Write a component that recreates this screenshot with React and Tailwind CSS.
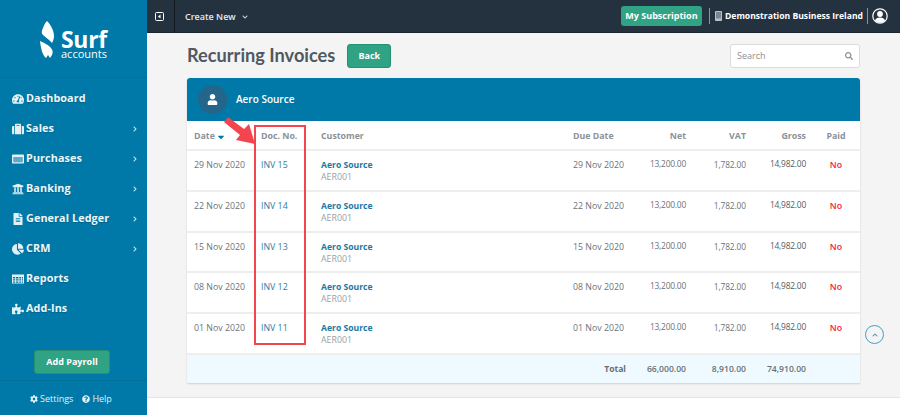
import React from "react";
import {
  FaTachometerAlt,
  FaSuitcase,
  FaUniversity,
  FaFileAlt,
  FaChartPie,
  FaPuzzlePiece,
  FaCog,
  FaQuestionCircle,
  FaSearch,
  FaUser,
  FaChevronRight,
  FaChevronUp,
  FaChevronDown,
  FaCaretDown,
} from "react-icons/fa";

const WindowIcon = ({ className }) => (
  <svg viewBox="0 0 12 12" className={className}>
    <rect x="0" y="1.5" width="12" height="9" rx="0.8" fill="currentColor" />
    <rect x="1.2" y="4" width="9.6" height="5.3" fill="#5fa9c8" />
  </svg>
);

const GridIcon = ({ className }) => (
  <svg viewBox="0 0 12 12" className={className}>
    <rect x="0" y="1.5" width="12" height="9" fill="currentColor" />
    <path d="M1 4H3.2V5.4H1ZM4 4H6.5V5.4H4ZM7.3 4H9V5.4H7.3ZM9.8 4H11V5.4H9.8ZM1 6.2H3.2V7.6H1ZM4 6.2H6.5V7.6H4ZM7.3 6.2H9V7.6H7.3ZM9.8 6.2H11V7.6H9.8ZM1 8.4H3.2V9.7H1ZM4 8.4H6.5V9.7H4ZM7.3 8.4H9V9.7H7.3ZM9.8 8.4H11V9.7H9.8Z" fill="#0079a8" />
  </svg>
);

const navItems = [
  { label: "Dashboard", icon: FaTachometerAlt },
  { label: "Sales", icon: FaSuitcase, arrow: true },
  { label: "Purchases", icon: WindowIcon, arrow: true },
  { label: "Banking", icon: FaUniversity, arrow: true },
  { label: "General Ledger", icon: FaFileAlt, arrow: true },
  { label: "CRM", icon: FaChartPie, arrow: true },
  { label: "Reports", icon: GridIcon },
  { label: "Add-Ins", icon: FaPuzzlePiece },
];

const rows = [
  { date: "29 Nov 2020", doc: "INV 15" },
  { date: "22 Nov 2020", doc: "INV 14" },
  { date: "15 Nov 2020", doc: "INV 13" },
  { date: "08 Nov 2020", doc: "INV 12" },
  { date: "01 Nov 2020", doc: "INV 11" },
];

const cols = "grid grid-cols-[67px_60px_252px_73px_40px_60px_60px_54px]";

const Sidebar = () => (
  <div className="w-[147px] shrink-0 h-[415px] bg-[#0079a8] flex flex-col text-white">
    <div className="h-[78px] border-b border-[#066f99] flex items-start pl-[40px]">
      <svg width="15" height="37" viewBox="40 21 15 37" className="mr-[6px] mt-[21px]">
        <path d="M47 21C51 25 54 31 54 36C54 39 53 41 52 43C50 40 46 38 43 35C41 33 42 30 43 28C44 25 45 23 47 21Z" fill="white" />
        <path d="M40 41C44 43 49 45 51 48C53 50 53 53 52 55L50 58L48 55L46 58C43 56 41 50 40 41Z" fill="white" />
      </svg>
      <div className="flex flex-col mt-[31px]">
        <span className="text-[23px] font-bold leading-[17px] tracking-[-0.3px]">Surf</span>
        <span className="text-[11px] leading-[13px] mt-[-1px]">accounts</span>
      </div>
    </div>
    <div className="flex flex-col pt-[5.5px]">
      {navItems.map((item) => {
        const Icon = item.icon;
        return (
          <div key={item.label} className="h-[30px] flex items-center pl-[12px] pr-[9px]">
            <Icon className="w-[12px] h-[12px] text-[#e3f1f6] mr-[2px]" />
            <span className="text-[10.8px] font-bold text-[#eef7fa] tracking-[0.1px] [text-shadow:0_1px_1px_rgba(0,0,0,0.2)]">
              {item.label}
            </span>
            {item.arrow && <FaChevronRight className="w-[6px] h-[6px] ml-auto text-[#d6eaf2]" />}
          </div>
        );
      })}
    </div>
    <div className="mt-[26.5px] pl-[34px]">
      <div className="w-[76px] h-[24px] rounded-[3px] bg-[#2fa384] border border-[#288f75] flex items-center justify-center text-[9px] font-bold">
        Add Payroll
      </div>
    </div>
    <div className="mt-[6px] pt-[7px] pl-[30px] border-t border-[#066f99] flex-1 flex items-start text-[9px] text-[#e3f1f6]">
      <div className="flex items-center h-[22px]">
        <FaCog className="w-[8px] h-[8px] mr-[2px]" />
        <span>Settings</span>
        <span className="w-px h-[10px] bg-[#066f99] mx-[4px]"></span>
        <FaQuestionCircle className="w-[8px] h-[8px] mr-[2px]" />
        <span>Help</span>
      </div>
    </div>
  </div>
);

const Topbar = () => (
  <div className="h-[33px] shrink-0 bg-[#243240] border-b border-[#1a2530] flex items-center text-white">
    <div className="w-[28px] h-full border-r border-[#101820] flex items-center justify-center pr-[2px]">
      <svg width="9" height="9" viewBox="0 0 9 9">
        <rect x="0.5" y="0.5" width="8" height="8" rx="1" fill="none" stroke="white" />
        <path d="M5.5 2.5V6.5L3 4.5Z" fill="white" />
      </svg>
    </div>
    <span className="ml-[10px] text-[9px] font-semibold text-[#e6e9ec] mt-[1px]">Create New</span>
    <FaChevronDown className="w-[6px] h-[6px] ml-[6px] text-[#cfd5da] mt-[1px]" />
    <div className="ml-auto flex items-center">
      <div className="w-[81px] h-[20px] rounded-[3px] bg-[#2fa384] flex items-center justify-center text-[9px] font-bold">
        My Subscription
      </div>
      <span className="w-px h-[16px] bg-[#8a949d] ml-[7px] mr-[5px]"></span>
      <svg width="8" height="10" viewBox="0 0 8 10" className="mr-[2px]">
        <rect x="0" y="0" width="7" height="10" rx="0.8" fill="#b9c0c6" />
        <rect x="1" y="1" width="5" height="6.5" fill="#7d868e" />
      </svg>
      <span className="text-[8.6px] font-bold">Demonstration Business Ireland</span>
      <span className="w-px h-[16px] bg-[#8a949d] ml-[4px] mr-[4px]"></span>
      <svg width="16" height="16" viewBox="0 0 16 16" className="mr-[12px]">
        <circle cx="8" cy="8" r="7.2" fill="#243240" stroke="white" strokeWidth="1.2" />
        <circle cx="8" cy="6" r="2.9" fill="white" />
        <path d="M3 13C3.5 10.5 5.5 9.6 8 9.6C10.5 9.6 12.5 10.5 13 13C11.6 14.2 9.9 14.8 8 14.8C6.1 14.8 4.4 14.2 3 13Z" fill="white" />
      </svg>
    </div>
  </div>
);

const Table = () => (
  <div className="bg-white shadow-[0_1px_2px_rgba(0,0,0,0.15)] rounded-t-[3px]">
    <div className="h-[43px] bg-[#0079a8] rounded-t-[3px] flex items-center pl-[11px]">
      <div className="w-[29px] h-[29px] rounded-full bg-[#23668a] flex items-center justify-center">
        <FaUser className="w-[11px] h-[11px] text-white" />
      </div>
      <span className="ml-[9px] text-[10px] font-semibold text-white">Aero Source</span>
    </div>
    <div className={`${cols} h-[30px] items-center pl-[7px] pt-[3px] text-[8.8px] font-bold text-[#8b9299] border-b-2 border-[#eeeeee]`}>
      <div className="flex items-center gap-[1px]">
        Date <FaCaretDown className="w-[10px] h-[10px] text-[#0079a8]" />
      </div>
      <div>Doc. No.</div>
      <div>Customer</div>
      <div>Due Date</div>
      <div className="text-right">Net</div>
      <div className="text-right">VAT</div>
      <div className="text-right">Gross</div>
      <div className="text-center pl-[6px]">Paid</div>
    </div>
    {rows.map((row) => (
      <div key={row.doc} className={`${cols} h-[40.75px] pl-[7px] pt-[8px] text-[8.8px] text-[#6d7378] border-b-2 border-[#eeeeee]`}>
        <div>{row.date}</div>
        <div className="text-[#2b7da8]">{row.doc}</div>
        <div>
          <div className="font-bold text-[8.6px] text-[#1d78a3] leading-[12px]">Aero Source</div>
          <div className="text-[#9a9fa4] leading-[12px]">AER001</div>
        </div>
        <div>{row.date}</div>
        <div className="text-right text-[8.4px] tracking-[-0.2px] mt-[-1px]">13,200.00</div>
        <div className="text-right text-[8.4px] tracking-[-0.1px]">1,782.00</div>
        <div className="text-right text-[8.4px] tracking-[-0.2px] font-medium mt-[-1px] text-[#555a5e]">14,982.00</div>
        <div className="text-center pl-[6px] font-semibold text-[#f5213c]">No</div>
      </div>
    ))}
    <div className={`${cols} h-[28.5px] items-center pl-[7px] text-[8.6px] font-semibold text-[#6a7075] bg-[#eefaff]`}>
      <div className="col-span-4 text-right font-bold pr-[20px]">Total</div>
      <div className="text-right">66,000.00</div>
      <div className="text-right">8,910.00</div>
      <div className="text-right">74,910.00</div>
      <div></div>
    </div>
  </div>
);

export default function App() {
  return (
    <div className="relative w-[900px] h-[415px] overflow-hidden flex bg-white font-['Open_Sans',sans-serif]">
      <Sidebar />
      <div className="flex-1 flex flex-col min-w-0">
        <Topbar />
        <div className="h-[365px] bg-[#f4f4f4] border-b border-[#e4e4e8] pl-[40px] pr-[40px]">
          <div className="h-[45px] flex items-center">
            <h1 className="font-['Lato',sans-serif] font-bold text-[18.2px] text-[#505860]">Recurring Invoices</h1>
            <div className="ml-[12px] w-[44px] h-[24px] rounded-[3px] bg-[#2fa384] border border-[#288f75] flex items-center justify-center text-[9px] font-bold text-white">
              Back
            </div>
            <div className="ml-auto w-[130px] h-[24px] rounded-[3px] bg-white border border-[#dcdcdc] flex items-center px-[6px] text-[9px] text-[#8b9095]">
              Search
              <FaSearch className="w-[8px] h-[8px] ml-auto text-[#8b9095]" />
            </div>
          </div>
          <Table />
        </div>
      </div>

      {/* annotation */}
      <div className="absolute left-[254px] top-[125px] w-[52px] h-[220px] border-2 border-[#f4444e]"></div>
      <svg className="absolute left-[222px] top-[116px]" width="36" height="31" viewBox="0 0 36 31">
        <path d="M2 6L6 1L22 13L27 8L33 28L14 24L18 19Z" fill="#f4444e" />
      </svg>
      <div className="absolute left-[865px] top-[325px] w-[19px] h-[19px] rounded-full border-[1.5px] border-[#4b9bbd] flex items-center justify-center">
        <FaChevronUp className="w-[6px] h-[6px] text-[#4b9bbd]" />
      </div>
    </div>
  );
}
